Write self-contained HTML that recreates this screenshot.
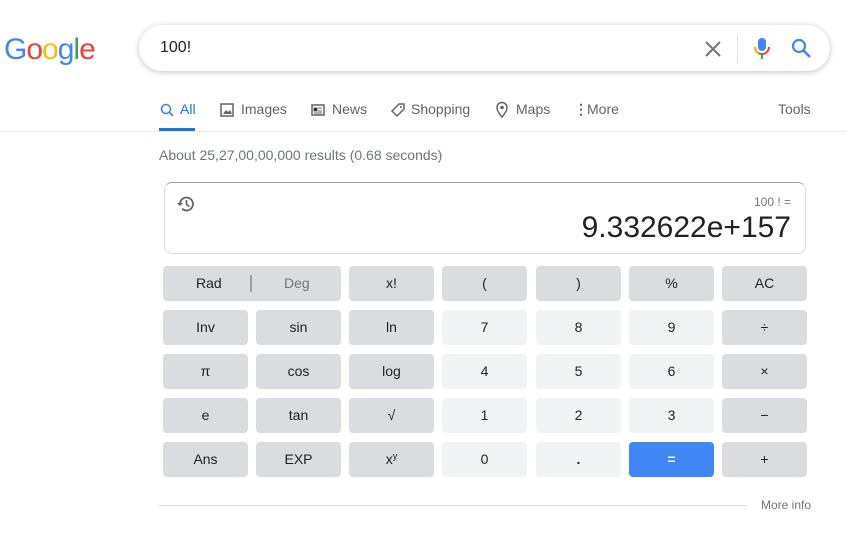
<!DOCTYPE html>
<html><head><meta charset="utf-8"><style>
body{margin:0;width:847px;height:550px;background:#fff;font-family:"Liberation Sans",Arial,sans-serif;position:relative;overflow:hidden;color:#202124}
.abs{position:absolute}
.logo{left:4px;top:33px;font-size:30px;letter-spacing:-1px;font-weight:normal}
.search{left:139px;top:25px;width:691px;height:46px;border-radius:24px;box-shadow:0 1px 6px rgba(32,33,36,.28)}
.nav{top:101px;font-size:14px;color:#5f6368}
.b{position:absolute;width:85px;height:35px;border-radius:4px;background:#dadce0;font-size:14px;text-align:center;line-height:35px;color:#202124}
.l{background:#f1f3f4}
</style></head><body>
<div class="abs logo"><span style="color:#4285f4">G</span><span style="color:#ea4335">o</span><span style="color:#fbbc05">o</span><span style="color:#4285f4">g</span><span style="color:#34a853">l</span><span style="color:#ea4335">e</span></div>
<div class="abs search"></div>
<div class="abs" style="left:160px;top:39px;font-size:16px">100!</div>
<svg class="abs" style="left:703px;top:39px" width="20" height="20"><path d="M3 3L17 17M17 3L3 17" stroke="#70757a" stroke-width="2"/></svg>
<div class="abs" style="left:737px;top:35px;width:1px;height:28px;background:#dfe1e5"></div>
<svg class="abs" style="left:752px;top:36px" width="20" height="26"><rect x="6" y="2" width="8" height="13" rx="4" fill="#4285f4"/><path d="M3 11a7 7 0 0 0 14 0" fill="none" stroke="#ea4335" stroke-width="2"/><path d="M3 11a7 7 0 0 0 4 6" fill="none" stroke="#fbbc05" stroke-width="2"/><rect x="9" y="18" width="2" height="5" fill="#34a853"/></svg>
<svg class="abs" style="left:791px;top:38px" width="22" height="22"><circle cx="8" cy="8" r="6" fill="none" stroke="#4285f4" stroke-width="2.2"/><path d="M12.5 12.5L19 19" stroke="#4285f4" stroke-width="2.6"/></svg>
<svg class="abs" style="left:160px;top:103px" width="14" height="14"><circle cx="6" cy="6" r="4.5" fill="none" stroke="#4285f4" stroke-width="1.6"/><path d="M9.5 9.5L13 13" stroke="#4285f4" stroke-width="1.8"/></svg>
<div class="abs nav" style="left:180px;color:#1a73e8">All</div>
<div class="abs" style="left:159px;top:128px;width:36px;height:3px;background:#1a73e8"></div>
<svg class="abs" style="left:220px;top:103px" width="14" height="14"><rect x="1" y="1" width="12" height="12" fill="none" stroke="#5f6368" stroke-width="1.5"/><path d="M3 11l3-4 2 2 2-2 2 4z" fill="#5f6368"/></svg>
<div class="abs nav" style="left:241px">Images</div>
<svg class="abs" style="left:311px;top:103px" width="14" height="14"><rect x="1" y="2" width="12" height="10" fill="none" stroke="#5f6368" stroke-width="1.5"/><path d="M3 5h3v3H3zM7 5h4M7 8h4M3 10h8" stroke="#5f6368" stroke-width="1"/></svg>
<div class="abs nav" style="left:332px">News</div>
<svg class="abs" style="left:390px;top:102px" width="16" height="16"><path d="M2 9l7-7h5v5l-7 7z" fill="none" stroke="#5f6368" stroke-width="1.5"/><circle cx="11" cy="5" r="1" fill="#5f6368"/></svg>
<div class="abs nav" style="left:411px">Shopping</div>
<svg class="abs" style="left:495px;top:101px" width="14" height="18"><path d="M7 16C3 11 2 9 2 6.5a5 5 0 0 1 10 0C12 9 11 11 7 16z" fill="none" stroke="#5f6368" stroke-width="1.5"/><circle cx="7" cy="6.5" r="1.8" fill="#5f6368"/></svg>
<div class="abs nav" style="left:516px">Maps</div>
<div class="abs nav" style="left:574px;font-weight:bold">⋮</div>
<div class="abs nav" style="left:587px">More</div>
<div class="abs nav" style="left:778px">Tools</div>
<div class="abs" style="left:0;top:131px;width:847px;height:1px;background:#ebebeb"></div>
<div class="abs" style="left:159px;top:147px;font-size:14px;color:#70757a">About 25,27,00,00,000 results (0.68 seconds)</div>
<div class="abs" style="left:164px;top:182px;width:640px;height:70px;border:1px solid #dadce0;border-top-color:#9aa0a6;border-radius:8px"></div>
<svg class="abs" style="left:176px;top:194px" width="20" height="20"><path d="M4 10a6.5 6.5 0 1 1 2 4.7" fill="none" stroke="#5f6368" stroke-width="1.8"/><path d="M1 9l3 3 3-3" fill="#5f6368"/><path d="M10.5 6v4.5l3 2" fill="none" stroke="#5f6368" stroke-width="1.6"/></svg>
<div class="abs" style="right:56px;top:195px;font-size:12px;color:#70757a">100 ! =</div>
<div class="abs" style="right:56px;top:211px;font-size:30px;color:#202124">9.332622e+157</div>
<div class="b" style="left:163px;top:266px;width:178px"><span style="position:absolute;left:33px">Rad</span><span style="position:absolute;left:87px;top:9px;width:2px;height:17px;background:#9aa0a6"></span><span style="position:absolute;left:121px;color:#70757a">Deg</span></div>
<div class="b" style="left:349px;top:266px">x!</div>
<div class="b" style="left:442px;top:266px">(</div>
<div class="b" style="left:536px;top:266px">)</div>
<div class="b" style="left:629px;top:266px">%</div>
<div class="b" style="left:722px;top:266px">AC</div>
<div class="b" style="left:163px;top:310px">Inv</div>
<div class="b" style="left:256px;top:310px">sin</div>
<div class="b" style="left:349px;top:310px">ln</div>
<div class="b l" style="left:442px;top:310px">7</div>
<div class="b l" style="left:536px;top:310px">8</div>
<div class="b l" style="left:629px;top:310px">9</div>
<div class="b" style="left:722px;top:310px">÷</div>
<div class="b" style="left:163px;top:354px">π</div>
<div class="b" style="left:256px;top:354px">cos</div>
<div class="b" style="left:349px;top:354px">log</div>
<div class="b l" style="left:442px;top:354px">4</div>
<div class="b l" style="left:536px;top:354px">5</div>
<div class="b l" style="left:629px;top:354px">6</div>
<div class="b" style="left:722px;top:354px">×</div>
<div class="b" style="left:163px;top:398px">e</div>
<div class="b" style="left:256px;top:398px">tan</div>
<div class="b" style="left:349px;top:398px">√</div>
<div class="b l" style="left:442px;top:398px">1</div>
<div class="b l" style="left:536px;top:398px">2</div>
<div class="b l" style="left:629px;top:398px">3</div>
<div class="b" style="left:722px;top:398px">−</div>
<div class="b" style="left:163px;top:442px">Ans</div>
<div class="b" style="left:256px;top:442px">EXP</div>
<div class="b" style="left:349px;top:442px">x<span style="font-size:9px;position:relative;top:-5px">y</span></div>
<div class="b l" style="left:442px;top:442px">0</div>
<div class="b l" style="left:536px;top:442px;font-weight:bold">.</div>
<div class="b" style="left:629px;top:442px;background:#4285f4;color:#fff;font-weight:bold">=</div>
<div class="b" style="left:722px;top:442px">+</div>
<div class="abs" style="left:159px;top:505px;width:588px;height:1px;background:#dadce0"></div>
<div class="abs" style="left:761px;top:498px;font-size:12px;color:#70757a">More info</div>
</body></html>
